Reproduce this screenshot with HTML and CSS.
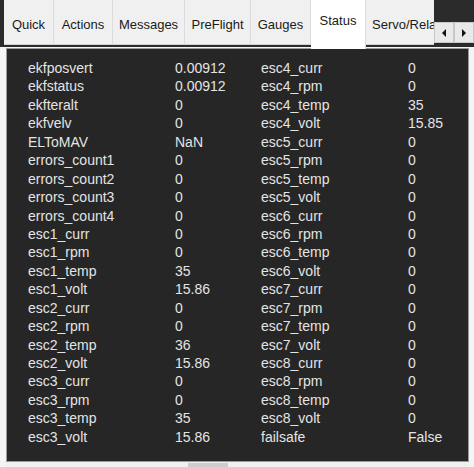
FILE: index.html
```html
<!DOCTYPE html>
<html>
<head>
<meta charset="utf-8">
<link rel="stylesheet" href="styles.css">
</head>
<body>
<div class="window">
  <div class="tabbar">
    <div class="lead"></div>
    <div class="tab w-quick">Quick</div>
    <div class="tab w-actions">Actions</div>
    <div class="tab w-messages">Messages</div>
    <div class="tab w-preflight">PreFlight</div>
    <div class="tab w-gauges">Gauges</div>
    <div class="tab active w-status">Status</div>
    <div class="tab w-servo"><span>Servo/Relay</span></div>
    <div class="arrows">
      <div class="arrow"><svg width="6" height="8" viewBox="0 0 6 8"><path d="M5 0 L1 4 L5 8 Z" fill="#111"/></svg></div>
      <div class="arrow"><svg width="6" height="8" viewBox="0 0 6 8"><path d="M1 0 L5 4 L1 8 Z" fill="#111"/></svg></div>
    </div>
  </div>
  <div class="content">
    <div class="panel">
      <div class="grid">
        <span>ekfposvert</span><span>0.00912</span><span>esc4_curr</span><span>0</span>
        <span>ekfstatus</span><span>0.00912</span><span>esc4_rpm</span><span>0</span>
        <span>ekfteralt</span><span>0</span><span>esc4_temp</span><span>35</span>
        <span>ekfvelv</span><span>0</span><span>esc4_volt</span><span>15.85</span>
        <span>ELToMAV</span><span>NaN</span><span>esc5_curr</span><span>0</span>
        <span>errors_count1</span><span>0</span><span>esc5_rpm</span><span>0</span>
        <span>errors_count2</span><span>0</span><span>esc5_temp</span><span>0</span>
        <span>errors_count3</span><span>0</span><span>esc5_volt</span><span>0</span>
        <span>errors_count4</span><span>0</span><span>esc6_curr</span><span>0</span>
        <span>esc1_curr</span><span>0</span><span>esc6_rpm</span><span>0</span>
        <span>esc1_rpm</span><span>0</span><span>esc6_temp</span><span>0</span>
        <span>esc1_temp</span><span>35</span><span>esc6_volt</span><span>0</span>
        <span>esc1_volt</span><span>15.86</span><span>esc7_curr</span><span>0</span>
        <span>esc2_curr</span><span>0</span><span>esc7_rpm</span><span>0</span>
        <span>esc2_rpm</span><span>0</span><span>esc7_temp</span><span>0</span>
        <span>esc2_temp</span><span>36</span><span>esc7_volt</span><span>0</span>
        <span>esc2_volt</span><span>15.86</span><span>esc8_curr</span><span>0</span>
        <span>esc3_curr</span><span>0</span><span>esc8_rpm</span><span>0</span>
        <span>esc3_rpm</span><span>0</span><span>esc8_temp</span><span>0</span>
        <span>esc3_temp</span><span>35</span><span>esc8_volt</span><span>0</span>
        <span>esc3_volt</span><span>15.86</span><span>failsafe</span><span>False</span>
      </div>
    </div>
    <div class="hscroll"><div class="thumb"></div></div>
  </div>
</div>
</body>
</html>
```

FILE: styles.css
```css
* { box-sizing: border-box; }
html, body { margin: 0; padding: 0; }
body {
  width: 474px;
  height: 467px;
  overflow: hidden;
  background: #f4f4f4;
  font-family: "Liberation Sans", Arial, sans-serif;
}
.window { width: 474px; height: 467px; display: flex; flex-direction: column; }
.tabbar {
  height: 47px;
  display: flex;
  background: #2b2b2b;
  position: relative;
  flex: none;
}
.lead { width: 4px; flex: none; }
.tab {
  flex: none;
  height: 45px;
  background: #f0f0f0;
  border-right: 1px solid #dcdcdc;
  border-bottom: 1px solid #d0d0d0;
  color: #1a1a1a;
  font-size: 13px;
  display: flex;
  align-items: center;
  justify-content: center;
  padding-top: 4px;
  overflow: hidden;
  white-space: nowrap;
}
.tab.active {
  background: #ffffff;
  height: 49px;
  border-bottom: none;
  padding-top: 0;
  padding-bottom: 8px;
  position: relative;
  z-index: 2;
}
.w-quick { width: 50px; }
.w-actions { width: 59px; }
.w-messages { width: 72px; }
.w-preflight { width: 66px; }
.w-gauges { width: 60px; }
.w-status { width: 55px; }
.w-servo { width: 68px; justify-content: flex-start; padding-left: 6px; border-right: none; }
.arrows {
  flex: none;
  width: 40px;
  height: 21px;
  margin-top: 22px;
  display: flex;
}
.arrow {
  width: 20px;
  height: 21px;
  background: #e9e9e9;
  border: 1px solid #c8c8c8;
  display: flex;
  align-items: center;
  justify-content: center;
}
.content {
  flex: 1;
  display: flex;
  flex-direction: column;
  padding: 1px 5px 0 6px;
  background: #f4f4f4;
}
.panel {
  height: 414px;
  background: #262626;
  border: 1px solid #9a9a9a;
  padding: 10px 0 0 21px;
}
.grid {
  display: grid;
  grid-template-columns: 147px 86px 147px 1fr;
  grid-auto-rows: 18.45px;
  line-height: 18.45px;
  font-size: 14px;
  color: #e4e4e4;
  white-space: nowrap;
}
.hscroll {
  height: 6px;
  position: relative;
  background: #f0f0f0;
}
.thumb {
  position: absolute;
  left: 182px;
  top: 1px;
  width: 40px;
  height: 5px;
  background: #cdcdcd;
}
```
